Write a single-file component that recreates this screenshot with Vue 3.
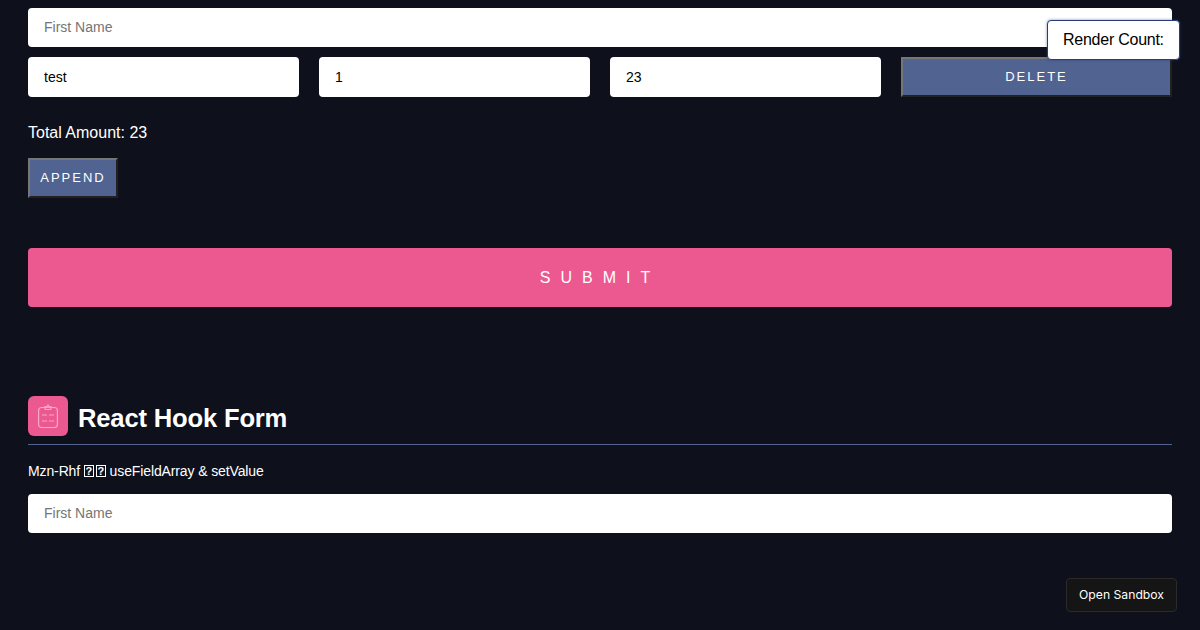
<script setup>
import { ref } from 'vue'

const rows = ref([{ id: 1, name: 'test', qty: '1', price: '23' }])
const total = 23
</script>

<template>
  <div class="page">
    <form class="form" @submit.prevent>
      <input class="field" placeholder="First Name" />
      <div v-for="row in rows" :key="row.id" class="row">
        <input class="field" :value="row.name" />
        <input class="field" :value="row.qty" />
        <input class="field" :value="row.price" />
        <button type="button" class="small-btn">DELETE</button>
      </div>
      <p class="total">Total Amount: {{ total }}</p>
      <button type="button" class="small-btn append">APPEND</button>
      <button type="submit" class="submit">SUBMIT</button>
    </form>

    <header class="head">
      <span class="logo">
        <svg width="20" height="24" viewBox="0 0 20 24" fill="none" stroke="#f9a8c8" stroke-width="1.2">
          <rect x="0.6" y="3.5" width="18.8" height="20" rx="3" />
          <path d="M7 3.5V2.5h2l1-1.5 1 1.5h2v2a1 1 0 0 1-1 1H8a1 1 0 0 1-1-1z" />
          <path d="M4 11h5M11 11h5M4 17h5M11 17h5" />
        </svg>
      </span>
      <h1>React Hook Form</h1>
    </header>
    <p class="sub">Mzn-Rhf <span class="tofu">?</span><span class="tofu">?</span> useFieldArray &amp; setValue</p>
    <input class="field" placeholder="First Name" />

    <div class="render-count">Render Count:</div>
    <a class="sandbox">Open Sandbox</a>
  </div>
</template>

<style>
html,
body {
  margin: 0;
  background: #0e101c;
  overflow: hidden;
}
</style>

<style scoped>
.page {
  position: relative;
  height: 630px;
  box-sizing: border-box;
  padding: 8px 28px 0;
  font-family: "Liberation Sans", Arial, sans-serif;
  color: #fff;
  background: #0e101c;
  overflow: hidden;
}

.form {
  display: flex;
  flex-direction: column;
  align-items: flex-start;
}

.field {
  display: block;
  width: 100%;
  height: 39px;
  box-sizing: border-box;
  padding: 0 16px 2px;
  border: 0;
  border-radius: 4px;
  background: #fff;
  color: #000;
  font-family: inherit;
  font-size: 14px;
}

.field::placeholder {
  color: #757575;
}

.row {
  display: grid;
  grid-template-columns: repeat(4, 1fr);
  gap: 20px;
  width: 100%;
  margin-top: 10px;
}

.row .field {
  height: 40px;
  padding-bottom: 0;
}

.small-btn {
  height: 40px;
  box-sizing: border-box;
  border: 2px outset #767676;
  background: #516391;
  color: #fff;
  font-family: inherit;
  font-size: 13px;
  letter-spacing: 2px;
  padding: 0 0 2px;
}

.total {
  margin: 26px 0 0;
  font-size: 16px;
  line-height: 19px;
}

.append {
  width: 90px;
  margin-top: 16px;
}

.submit {
  width: 100%;
  height: 59px;
  margin-top: 50px;
  border: 0;
  border-radius: 4px;
  background: #ec5990;
  color: #fff;
  font-family: inherit;
  font-size: 16px;
  letter-spacing: 10px;
}

.head {
  display: flex;
  align-items: center;
  gap: 10px;
  margin-top: 89px;
  padding-bottom: 8px;
  border-bottom: 1px solid #516391;
}

.logo {
  display: flex;
  align-items: center;
  justify-content: center;
  width: 40px;
  height: 40px;
  border-radius: 6px;
  background: #ec5990;
}

h1 {
  margin: 4px 0 0;
  font-size: 25.6px;
  letter-spacing: -0.18px;
  line-height: 30px;
  font-weight: 700;
}

.sub {
  margin: 18px 0 15px;
  font-size: 14px;
  letter-spacing: -0.12px;
  line-height: 16px;
}

.tofu {
  display: inline-block;
  width: 10px;
  height: 12px;
  margin-top: 2px;
  box-sizing: border-box;
  border: 1px solid #fff;
  font-size: 11px;
  font-weight: 700;
  letter-spacing: 0;
  line-height: 10px;
  text-align: center;
  vertical-align: top;
}

.tofu + .tofu {
  margin-left: 2px;
}

.render-count {
  position: absolute;
  top: 20px;
  left: 1047px;
  width: 133px;
  height: 40px;
  box-sizing: border-box;
  padding-left: 15px;
  border: 1px solid #2b3a78;
  border-radius: 4px;
  background: #fff;
  color: #000;
  font-size: 16px;
  letter-spacing: -0.25px;
  line-height: 38px;
  box-shadow: 0 0 3px rgba(43, 58, 120, 0.6);
}

.sandbox {
  position: absolute;
  left: 1066px;
  top: 578px;
  width: 111px;
  height: 34px;
  box-sizing: border-box;
  border: 1px solid #2a2a2a;
  border-radius: 4px;
  background: #151515;
  color: #fff;
  font-family: Inter, sans-serif;
  font-size: 12.2px;
  line-height: 32px;
  text-align: center;
}
</style>
